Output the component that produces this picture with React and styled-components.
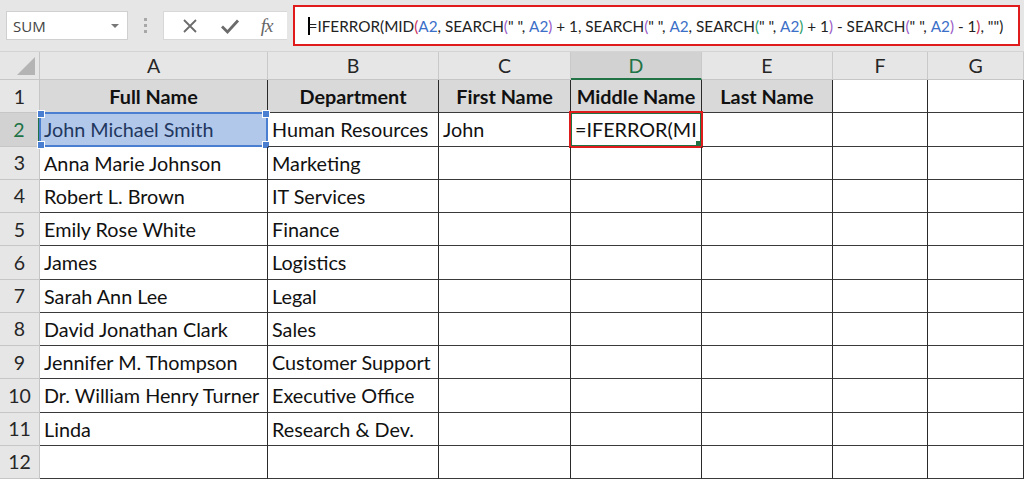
import React from 'react';
import styled, { createGlobalStyle, css } from 'styled-components';

const GlobalStyle = createGlobalStyle`
  html, body {
    margin: 0;
    padding: 0;
    background: #e6e6e6;
    font-family: Lato, "Open Sans", sans-serif;
  }
`;

const COLS = [
  { key: 'A', width: 228 },
  { key: 'B', width: 171 },
  { key: 'C', width: 132 },
  { key: 'D', width: 131 },
  { key: 'E', width: 131 },
  { key: 'F', width: 95 },
  { key: 'G', width: 96 },
];

const ROWS = [
  ['Full Name', 'Department', 'First Name', 'Middle Name', 'Last Name'],
  ['John Michael Smith', 'Human Resources', 'John', '=IFERROR(MI', ''],
  ['Anna Marie Johnson', 'Marketing'],
  ['Robert L. Brown', 'IT Services'],
  ['Emily Rose White', 'Finance'],
  ['James', 'Logistics'],
  ['Sarah Ann Lee', 'Legal'],
  ['David Jonathan Clark', 'Sales'],
  ['Jennifer M. Thompson', 'Customer Support'],
  ['Dr. William Henry Turner', 'Executive Office'],
  ['Linda', 'Research & Dev.'],
  [],
];

const Page = styled.div`
  width: 1024px;
  height: 480px;
  overflow: hidden;
  display: flex;
  flex-direction: column;
  background: #e6e6e6;
`;

const Toolbar = styled.div`
  height: 52px;
  flex: 0 0 52px;
  display: flex;
  align-items: center;
  padding: 0 4px 0 6px;
  box-sizing: border-box;
  background: #e6e6e6;
  border-bottom: 1px solid #d4d4d4;
`;

const NameBox = styled.div`
  width: 122px;
  height: 29px;
  box-sizing: border-box;
  background: #fff;
  border: 1px solid #d0d0d0;
  display: flex;
  align-items: center;
  justify-content: space-between;
  padding: 0 8px 0 6px;
  font-family: "Open Sans", sans-serif;
  font-size: 15px;
  color: #444;
`;

const Caret = styled.span`
  width: 0;
  height: 0;
  border-left: 4px solid transparent;
  border-right: 4px solid transparent;
  border-top: 4px solid #777;
`;

const Grip = styled.div`
  width: 35px;
  display: flex;
  flex-direction: column;
  align-items: center;
  gap: 3px;

  span {
    width: 3px;
    height: 3px;
    background: #a8a8a8;
  }
`;

const ActionBox = styled.div`
  width: 124px;
  height: 29px;
  box-sizing: border-box;
  background: #fff;
  border: 1px solid #d8d8d8;
  border-right: none;
  display: flex;
  align-items: center;
  justify-content: space-around;
  padding: 0 4px 0 6px;
`;

const Fx = styled.span`
  font-family: "Liberation Serif", serif;
  font-style: italic;
  font-size: 19px;
  color: #666;
  letter-spacing: -1px;
`;

const FormulaBar = styled.div`
  flex: 1;
  height: 41px;
  margin-left: 6px;
  box-sizing: border-box;
  background: #fff;
  border: 2px solid #e01b1b;
  display: flex;
  align-items: center;
  padding-left: 13px;
  font-size: 15.3px;
  color: #222;
  white-space: nowrap;
  overflow: hidden;
`;

const Cursor = styled.span`
  display: inline-block;
  width: 1.5px;
  height: 18px;
  background: #000;
  margin-right: -1px;
  vertical-align: middle;
`;

const Tok = styled.span`
  color: ${({ c }) => c || 'inherit'};
`;

const Sheet = styled.div`
  flex: 1;
  display: grid;
  grid-template-columns: 40px ${COLS.map((c) => `${c.width}px`).join(' ')};
  grid-template-rows: 28px repeat(12, 33.25px);
  background: #fff;
`;

const Corner = styled.div`
  position: relative;
  background: #e6e6e6;
  border-right: 1px solid #c6c6c6;
  border-bottom: 1px solid #c6c6c6;

  &::after {
    content: '';
    position: absolute;
    right: 4px;
    bottom: 4px;
    width: 0;
    height: 0;
    border-left: 18px solid transparent;
    border-bottom: 18px solid #b4b4b4;
  }
`;

const ColHead = styled.div`
  display: flex;
  align-items: center;
  justify-content: center;
  font-size: 19.5px;
  color: #262626;
  background: #e6e6e6;
  border-right: 1px solid #c9c9c9;
  border-bottom: 1px solid #c6c6c6;
  ${({ active }) =>
    active &&
    css`
      background: #d2d2d2;
      color: #217346;
      border-bottom: 2px solid #217346;
    `}
`;

const RowHead = styled.div`
  display: flex;
  align-items: center;
  justify-content: center;
  font-size: 19.5px;
  color: #262626;
  background: #e6e6e6;
  border-right: 1px solid #c6c6c6;
  border-bottom: 1px solid #c6c6c6;
  ${({ active }) =>
    active &&
    css`
      background: #d2d2d2;
      color: #217346;
      border-right: 2px solid #217346;
    `}
`;

const Cell = styled.div`
  position: relative;
  display: flex;
  align-items: center;
  padding: 0 4px;
  box-sizing: border-box;
  font-size: 19.8px;
  color: #111;
  white-space: nowrap;
  overflow: visible;
  border-right: 1px solid #2a2a2a;
  border-bottom: 1px solid #3a3a3a;
  ${({ header }) =>
    header &&
    css`
      background: #d9d9d9;
      font-weight: 700;
      justify-content: center;
    `}
`;

const Selection = styled.div`
  position: absolute;
  inset: -1px -1px -1px -1px;
  border: 2px solid #4a7ed0;
  background: rgba(100, 145, 215, 0.5);
  pointer-events: none;
`;

const Handle = styled.span`
  position: absolute;
  width: 6px;
  height: 6px;
  background: #4a7ed0;
  border: 1px solid #fff;
  ${({ pos }) => pos}
`;

const SelText = styled.span`
  position: relative;
  color: #22375e;
`;

const EditFrame = styled.div`
  position: absolute;
  inset: -2px -2px -2px -2px;
  border: 2px solid #e01b1b;
  box-shadow: inset 0 0 0 1px #217346;
  pointer-events: none;
`;

const FillDot = styled.span`
  position: absolute;
  right: 1px;
  bottom: 1px;
  width: 4px;
  height: 4px;
  background: #217346;
`;

const XIcon = () => (
  <svg width="18" height="18" viewBox="0 0 18 18">
    <path d="M3 3 L15 15 M15 3 L3 15" stroke="#6b6b6b" strokeWidth="1.8" fill="none" />
  </svg>
);

const CheckIcon = () => (
  <svg width="20" height="18" viewBox="0 0 20 18">
    <path d="M2 9.5 L7.5 15 L18 3.5" stroke="#6b6b6b" strokeWidth="2.8" fill="none" />
  </svg>
);

const formula = [
  ['='],
  ['IFERROR('],
  ['MID'],
  ['(', '#c8305a'],
  ['A2', '#3b6fc8'],
  [', SEARCH'],
  ['(', '#9a5cc6'],
  ['" ", '],
  ['A2', '#3b6fc8'],
  [')', '#9a5cc6'],
  [' + 1, SEARCH'],
  ['(', '#9a5cc6'],
  ['" ", '],
  ['A2', '#3b6fc8'],
  [', SEARCH'],
  ['(', '#2e9e6a'],
  ['" ", '],
  ['A2', '#3b6fc8'],
  [')', '#2e9e6a'],
  [' + 1'],
  [')', '#9a5cc6'],
  [' - SEARCH'],
  ['(', '#9a5cc6'],
  ['" ", '],
  ['A2', '#3b6fc8'],
  [')', '#9a5cc6'],
  [' - 1'],
  [')', '#c8305a'],
  [', "")'],
];

const App = () => (
  <>
    <GlobalStyle />
    <Page>
      <Toolbar>
        <NameBox>
          <span>SUM</span>
          <Caret />
        </NameBox>
        <Grip>
          <span />
          <span />
          <span />
        </Grip>
        <ActionBox>
          <XIcon />
          <CheckIcon />
          <Fx>fx</Fx>
        </ActionBox>
        <FormulaBar>
          <Cursor />
          {formula.map(([t, c], i) => (
            <Tok key={i} c={c}>
              {t.replace(/ /g, '\u00a0')}
            </Tok>
          ))}
        </FormulaBar>
      </Toolbar>
      <Sheet>
        <Corner />
        {COLS.map((col) => (
          <ColHead key={col.key} active={col.key === 'D'}>
            {col.key}
          </ColHead>
        ))}
        {ROWS.map((row, r) => (
          <React.Fragment key={r}>
            <RowHead active={r === 1}>{r + 1}</RowHead>
            {COLS.map((col, c) => {
              const value = row[c] || '';
              const isHeader = r === 0 && c < 5;
              if (r === 1 && c === 0) {
                return (
                  <Cell key={col.key}>
                    <Selection>
                      <Handle pos="left:-4px;top:-4px;" />
                      <Handle pos="right:-4px;top:-4px;" />
                      <Handle pos="left:-4px;bottom:-4px;" />
                      <Handle pos="right:-4px;bottom:-4px;" />
                    </Selection>
                    <SelText>{value}</SelText>
                  </Cell>
                );
              }
              if (r === 1 && c === 3) {
                return (
                  <Cell key={col.key}>
                    {value}
                    <EditFrame />
                    <FillDot />
                  </Cell>
                );
              }
              return (
                <Cell key={col.key} header={isHeader}>
                  {value}
                </Cell>
              );
            })}
          </React.Fragment>
        ))}
      </Sheet>
    </Page>
  </>
);

export default App;
